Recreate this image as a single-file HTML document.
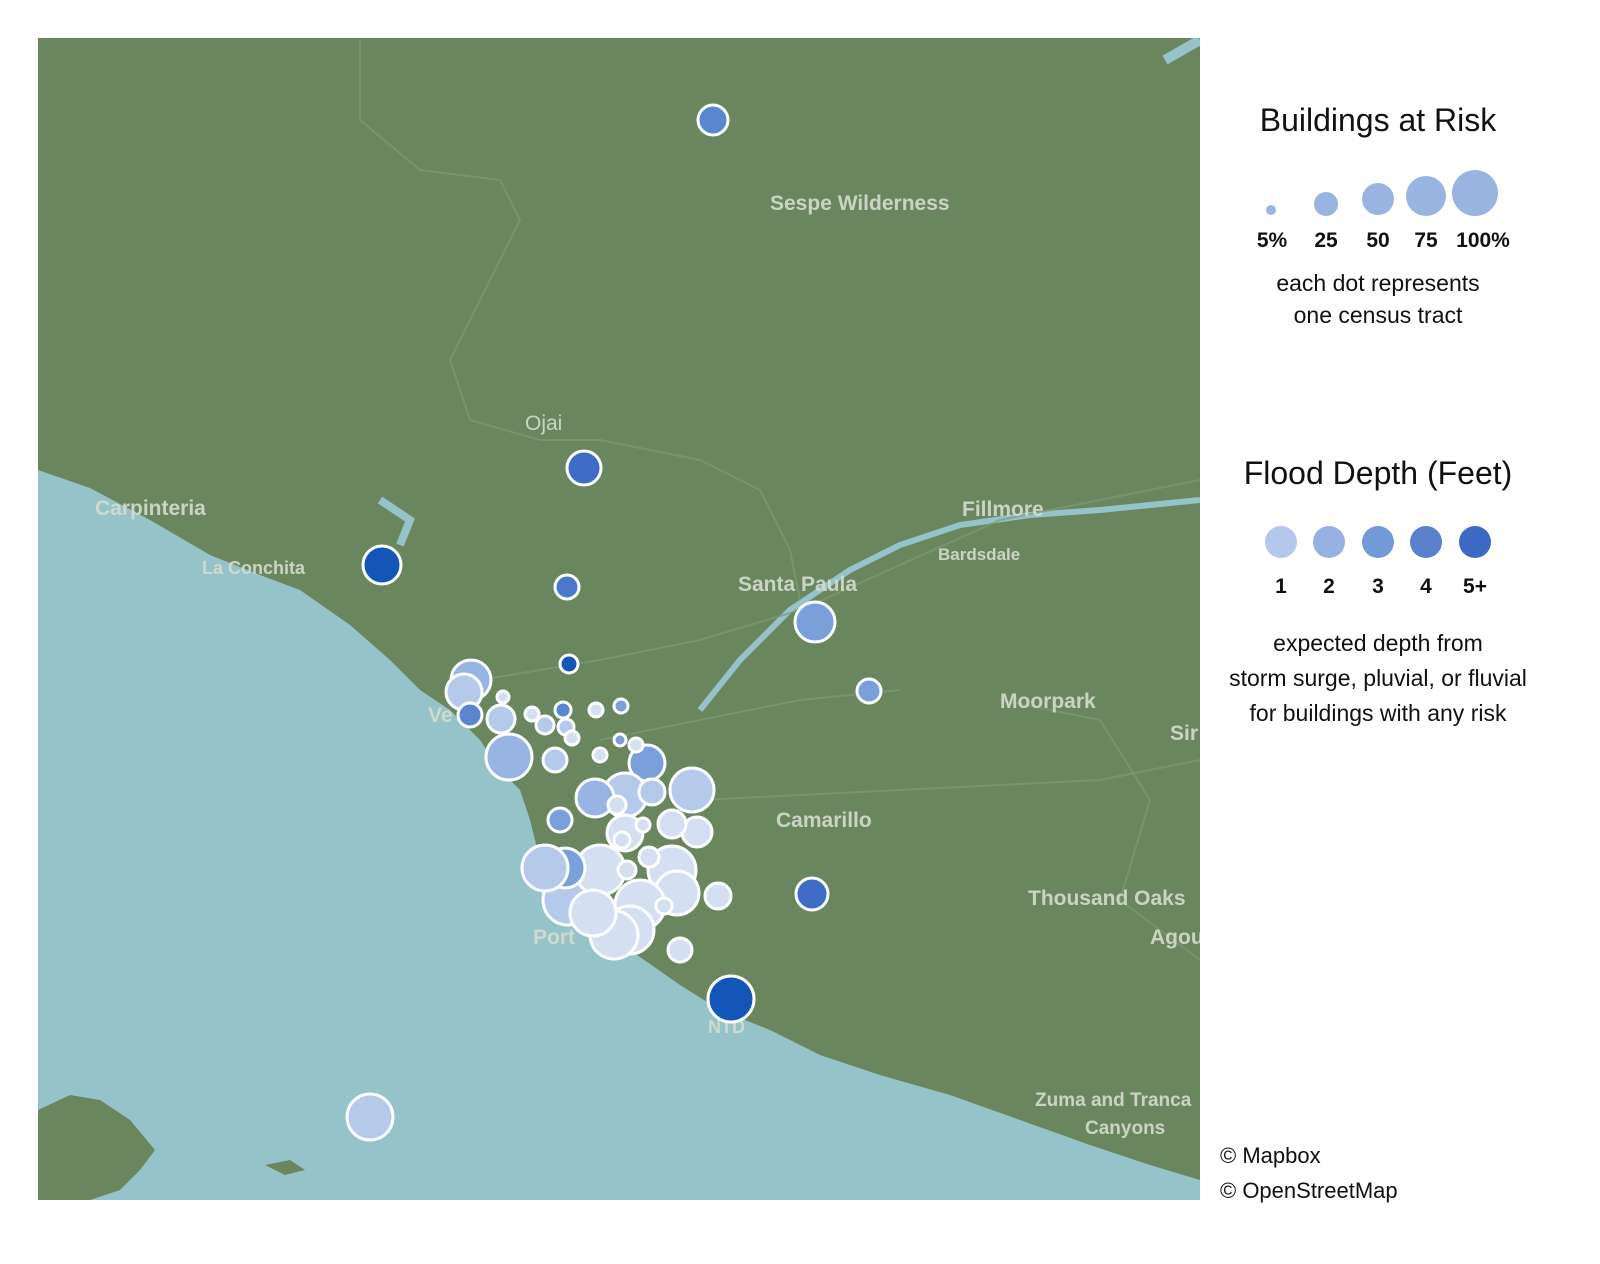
<!DOCTYPE html>
<html><head><style>
body{margin:0;background:#fff;width:1600px;height:1264px;overflow:hidden;font-family:"Liberation Sans",sans-serif}
.t{position:absolute;text-align:center;color:#111}
</style></head><body>
<svg width="1600" height="1264" style="position:absolute;left:0;top:0">
<defs><clipPath id="c"><rect x="38" y="38" width="1162" height="1162"/></clipPath></defs>
<g clip-path="url(#c)">
<rect x="38" y="38" width="1162" height="1162" fill="#6a865e"/>
<polygon fill="#96c3c9" points="38,470 90,488 150,520 210,555 260,575 300,590 350,625 390,660 420,690 450,710 480,740 500,770 520,790 530,820 540,860 560,900 590,930 630,950 680,985 720,1010 770,1030 820,1055 880,1075 950,1095 1020,1120 1090,1145 1150,1165 1200,1180 1200,1200 38,1200"/>
<polygon fill="#6a865e" points="38,1110 70,1095 100,1100 130,1120 155,1150 140,1170 120,1190 90,1200 38,1200"/>
<polygon fill="#6a865e" points="265,1165 290,1160 305,1170 285,1175"/>
<path d="M700,710 L740,660 L790,610 L850,570 L900,545 L960,525 L1030,515 L1100,510 L1200,500" stroke="#96c3c9" stroke-width="6" fill="none"/>
<path d="M380,500 L410,520 L400,545" stroke="#96c3c9" stroke-width="8" fill="none"/>
<path d="M1165,60 L1200,40" stroke="#96c3c9" stroke-width="10" fill="none"/>
<g fill="none" stroke="#7f9a73" stroke-width="2" opacity=".7">
<path d="M360,40 L360,120 L420,170 L500,180 L520,220 L480,300 L450,360 L470,420 L540,440 L600,440 L700,460 L760,490 L790,550 L800,600"/>
<path d="M480,680 L600,660 L700,640 L800,610 L1000,520 L1200,480"/>
<path d="M700,800 L900,790 L1100,780 L1200,760"/>
<path d="M1000,700 L1100,720 L1150,800 L1120,900 L1200,960"/>
<path d="M600,740 L700,720 L800,700 L900,690"/>
</g>
<g font-family="Liberation Sans" font-size="21" fill="#d6ddd0" opacity=".9" font-weight="bold">
<text x="770" y="210">Sespe Wilderness</text>
<text x="525" y="430" font-weight="normal">Ojai</text>
<text x="95" y="515">Carpinteria</text>
<text x="202" y="574" font-size="18">La Conchita</text>
<text x="962" y="516">Fillmore</text>
<text x="938" y="560" font-size="17">Bardsdale</text>
<text x="738" y="591">Santa Paula</text>
<text x="1000" y="708">Moorpark</text>
<text x="1170" y="740">Sir</text>
<text x="776" y="827">Camarillo</text>
<text x="1028" y="905">Thousand Oaks</text>
<text x="1150" y="944">Agou</text>
<text x="533" y="944">Port</text>
<text x="1035" y="1106" font-size="19">Zuma and Tranca</text>
<text x="1085" y="1134" font-size="19">Canyons</text>
<text x="428" y="722">Ve</text>
<text x="708" y="1033" font-size="18">NTD</text>
</g>
<g stroke="#fff" stroke-width="3">
<circle cx="713" cy="120" r="15" fill="#5a86cf"/>
<circle cx="584" cy="468" r="17" fill="#3f6cc7"/>
<circle cx="382" cy="565" r="19" fill="#1456b8"/>
<circle cx="567" cy="587" r="12" fill="#4a78cc"/>
<circle cx="569" cy="664" r="9" fill="#1456b8"/>
<circle cx="815" cy="622" r="20" fill="#7b9fdb"/>
<circle cx="869" cy="691" r="12" fill="#7b9fdb"/>
<circle cx="812" cy="894" r="16" fill="#3f6cc7"/>
<circle cx="731" cy="999" r="23" fill="#1456b8"/>
<circle cx="370" cy="1117" r="23" fill="#b5c9ea"/>
<circle cx="471" cy="680" r="20" fill="#98b4e3"/>
<circle cx="464" cy="692" r="18" fill="#b5c9ea"/>
<circle cx="470" cy="715" r="12" fill="#5a86cf"/>
<circle cx="501" cy="719" r="14" fill="#b5c9ea"/>
<circle cx="509" cy="757" r="23" fill="#98b4e3"/>
<circle cx="545" cy="725" r="9" fill="#b5c9ea"/>
<circle cx="563" cy="710" r="8" fill="#5a86cf"/>
<circle cx="596" cy="710" r="7" fill="#d4e0f2"/>
<circle cx="621" cy="706" r="7" fill="#7b9fdb"/>
<circle cx="566" cy="727" r="8" fill="#b5c9ea"/>
<circle cx="572" cy="738" r="7" fill="#d4e0f2"/>
<circle cx="555" cy="760" r="12" fill="#b5c9ea"/>
<circle cx="600" cy="755" r="7" fill="#d4e0f2"/>
<circle cx="620" cy="740" r="6" fill="#7b9fdb"/>
<circle cx="647" cy="763" r="18" fill="#7b9fdb"/>
<circle cx="560" cy="820" r="12" fill="#7b9fdb"/>
<circle cx="692" cy="790" r="22" fill="#b5c9ea"/>
<circle cx="625" cy="795" r="22" fill="#b5c9ea"/>
<circle cx="595" cy="798" r="19" fill="#98b4e3"/>
<circle cx="652" cy="792" r="13" fill="#b5c9ea"/>
<circle cx="697" cy="832" r="15" fill="#d4e0f2"/>
<circle cx="672" cy="824" r="14" fill="#d4e0f2"/>
<circle cx="625" cy="833" r="18" fill="#d4e0f2"/>
<circle cx="672" cy="870" r="24" fill="#d4e0f2"/>
<circle cx="677" cy="893" r="22" fill="#d4e0f2"/>
<circle cx="718" cy="896" r="13" fill="#d4e0f2"/>
<circle cx="568" cy="900" r="25" fill="#b5c9ea"/>
<circle cx="600" cy="870" r="25" fill="#d4e0f2"/>
<circle cx="640" cy="905" r="25" fill="#d4e0f2"/>
<circle cx="630" cy="930" r="24" fill="#d4e0f2"/>
<circle cx="565" cy="868" r="20" fill="#7b9fdb"/>
<circle cx="545" cy="868" r="23" fill="#b5c9ea"/>
<circle cx="614" cy="935" r="24" fill="#d4e0f2"/>
<circle cx="593" cy="913" r="23" fill="#d4e0f2"/>
<circle cx="649" cy="857" r="10" fill="#d4e0f2"/>
<circle cx="627" cy="870" r="9" fill="#d4e0f2"/>
<circle cx="643" cy="825" r="7" fill="#d4e0f2"/>
<circle cx="622" cy="840" r="8" fill="#d4e0f2"/>
<circle cx="617" cy="805" r="9" fill="#d4e0f2"/>
<circle cx="664" cy="906" r="8" fill="#d4e0f2"/>
<circle cx="680" cy="950" r="12" fill="#d4e0f2"/>
<circle cx="636" cy="745" r="7" fill="#d4e0f2"/>
<circle cx="503" cy="697" r="6" fill="#d4e0f2"/>
<circle cx="532" cy="714" r="7" fill="#d4e0f2"/>
</g>
</g>
<g fill="#9ab4e2">
<circle cx="1271" cy="210" r="5"/><circle cx="1326" cy="204" r="12"/><circle cx="1378" cy="199" r="16"/><circle cx="1426" cy="196" r="20"/><circle cx="1475" cy="193" r="23"/>
</g>
<g font-family="Liberation Sans" font-size="21" font-weight="bold" fill="#111" text-anchor="middle">
<text x="1272" y="247">5%</text><text x="1326" y="247">25</text><text x="1378" y="247">50</text><text x="1426" y="247">75</text><text x="1483" y="247">100%</text>
<text x="1281" y="593">1</text><text x="1329" y="593">2</text><text x="1378" y="593">3</text><text x="1426" y="593">4</text><text x="1475" y="593">5+</text>
</g>
<circle cx="1281" cy="542" r="16" fill="#b3c8eb"/>
<circle cx="1329" cy="542" r="16" fill="#95b2e3"/>
<circle cx="1378" cy="542" r="16" fill="#7399d8"/>
<circle cx="1426" cy="542" r="16" fill="#5882cd"/>
<circle cx="1475" cy="542" r="16" fill="#3c69c2"/>
</svg>
<div class="t" style="left:1210px;top:102px;width:336px;font-size:32px">Buildings at Risk</div>
<div class="t" style="left:1210px;top:267px;width:336px;font-size:23px;line-height:32px">each dot represents<br>one census tract</div>
<div class="t" style="left:1210px;top:455px;width:336px;font-size:32px">Flood Depth (Feet)</div>
<div class="t" style="left:1200px;top:626px;width:356px;font-size:23px;line-height:35px">expected depth from<br>storm surge, pluvial, or fluvial<br>for buildings with any risk</div>
<div class="t" style="left:1220px;top:1138px;font-size:22px;text-align:left;line-height:35px">© Mapbox<br>© OpenStreetMap</div>
</body></html>
